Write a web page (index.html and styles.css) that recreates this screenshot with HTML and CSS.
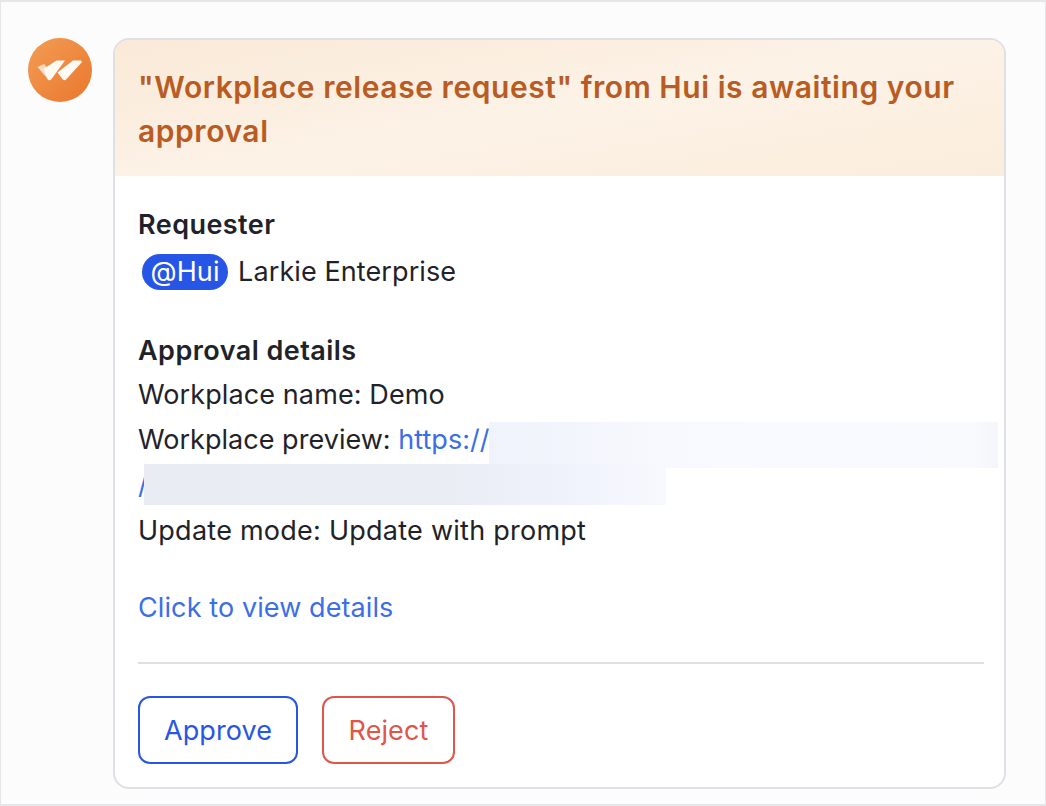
FILE: index.html
```html
<!DOCTYPE html>
<html lang="en">
<head>
<meta charset="utf-8">
<title>Approval card</title>
<link rel="stylesheet" href="styles.css">
</head>
<body>
<div class="frame">
  <div class="avatar">
    <svg class="logo" width="64" height="64" viewBox="0 0 64 64">
      <path class="logo-shade" d="M9.500 29 L16 26 L26 37.500 L21 42.500 Z"/>
      <path class="logo-mark" d="M15.500 31 L28.500 22.500 L37 22.500 L23.500 41 Q21.500 43.500 19.500 41 Z"/>
      <path class="logo-mark" d="M29.500 34.500 L45 22.500 L53 22.500 L54 24 L38.500 41 Q36.500 43.500 34.500 41 Z"/>
    </svg>
  </div>
  <div class="card">
    <div class="card-header">"Workplace release request" from Hui is awaiting your approval</div>
    <div class="card-body">
      <div class="line strong">Requester</div>
      <div class="line mention-line"><span class="mention">@Hui</span><span>Larkie Enterprise</span></div>
      <div class="line strong section">Approval details</div>
      <div class="line">Workplace name: Demo</div>
      <div class="line redact-line tight">Workplace preview:&nbsp;<a class="link">https://</a><span class="redact redact-a"></span></div>
      <div class="line redact-line second"><a class="link">/</a><span class="redact redact-b"></span></div>
      <div class="line wide">Update mode: Update with prompt</div>
      <div class="line section-link"><a class="link">Click to view details</a></div>
      <hr class="divider">
      <div class="actions">
        <button class="btn approve">Approve</button>
        <button class="btn reject">Reject</button>
      </div>
    </div>
  </div>
</div>
</body>
</html>
```
FILE: styles.css
```css
* { box-sizing: border-box; }
html, body { margin: 0; padding: 0; }
body {
  width: 1046px;
  height: 806px;
  overflow: hidden;
  font-family: Inter, "Liberation Sans", sans-serif;
  color: #1f2329;
}
.frame {
  width: 1046px;
  height: 806px;
  background: #fcfcfd;
  border: 2px solid #e6e6e8;
  border-left-width: 1px;
  border-right-width: 1px;
  padding: 36px 40px 15px 27px;
  display: flex;
  align-items: flex-start;
  gap: 21px;
}
.avatar {
  width: 64px;
  height: 64px;
  flex: none;
  border-radius: 50%;
  background: linear-gradient(135deg, #f39c54, #ea772e);
}
.logo { display: block; }
.logo-mark { fill: #fffaf3; }
.logo-shade { fill: #f6dcc6; }
.card {
  width: 893px;
  height: 751px;
  flex: none;
  background: #fff;
  border: 2px solid #dfe0e5;
  border-radius: 16px;
  overflow: hidden;
}
.card-header {
  height: 136px;
  padding: 25px 24px 0 23px;
  background: linear-gradient(170deg, #fae9d7 0%, #fcf2e6 50%, #fbeddd 100%);
  color: #b85c24;
  font-size: 30px;
  line-height: 44px;
  font-weight: 600;
  letter-spacing: 0.56px;
}
.card-body { padding: 26px 20px 0 23px; }
.line {
  font-size: 27px;
  line-height: 45px;
  letter-spacing: 0.1px;
  white-space: nowrap;
}
.strong { font-weight: 600; letter-spacing: 0.45px; }
.tight { letter-spacing: 0.03px; }
.wide { letter-spacing: 0.25px; }
.section { margin-top: 34px; height: 44px; }
.mention-line {
  display: flex;
  align-items: center;
  gap: 10px;
  padding-left: 4px;
  margin-top: 2px;
}
.mention {
  background: #2756e6;
  color: #fff;
  border-radius: 18px;
  line-height: 36px;
  padding: 0 8.5px;
}
.link { color: #3c6ee8; }
.redact-line { display: flex; align-items: flex-start; height: 45px; }
.second { height: 46px; }
.redact { display: block; flex: none; }
.redact-a {
  width: 509px;
  height: 46px;
  margin-top: 5px;
  margin-left: -1px;
  background: linear-gradient(90deg, #f0f3fb 0%, #f2f5fc 15%, #f8f9fe 35%, #f9fafe 95%, #f5f6fb 100%);
}
.redact-b {
  width: 522px;
  height: 41px;
  margin-top: 2px;
  margin-left: -4px;
  background: linear-gradient(90deg, #eaecf3 0%, #ebedf5 60%, #eff2fb 80%, #f8f9fe 100%);
}
.section-link { margin-top: 32px; }
.divider {
  border: 0;
  height: 2px;
  background: #dfdfe2;
  margin: 32px 0;
}
.actions { display: flex; gap: 24px; }
.btn {
  height: 68px;
  background: #fff;
  border: 2px solid;
  border-radius: 12px;
  font-family: inherit;
  font-size: 27px;
  letter-spacing: 0.1px;
  padding: 0;
}
.approve { width: 160px; color: #2756e6; border-color: #2756e6; }
.reject { width: 133px; color: #e0564a; border-color: #e0564a; }
```
